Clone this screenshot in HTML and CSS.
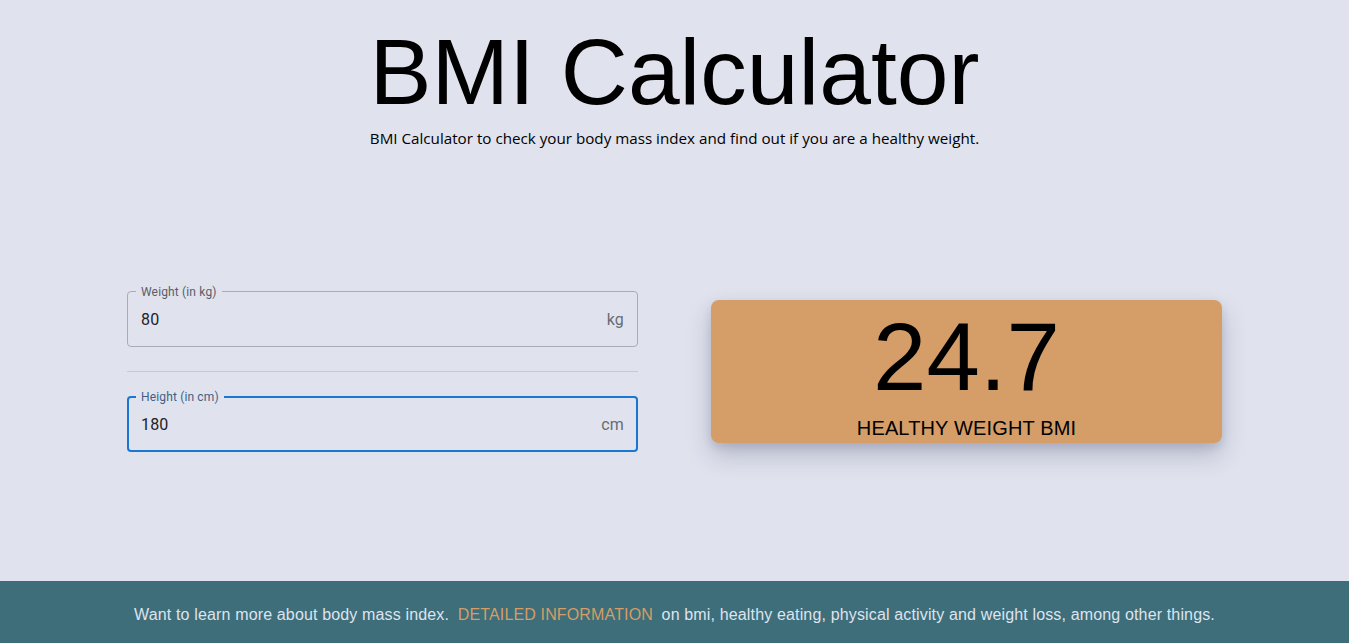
FILE: index.html
```html
<!DOCTYPE html>
<html lang="en">
<head>
<meta charset="utf-8">
<title>BMI Calculator</title>
<link rel="stylesheet" href="styles.css">
</head>
<body>
<div class="page">
  <header class="header">
    <h1 class="title">BMI Calculator</h1>
    <p class="subtitle">BMI Calculator to check your body mass index and find out if you are a healthy weight.</p>
  </header>
  <main class="main">
    <div class="form">
      <div class="field">
        <span class="field-label">Weight (in kg)</span>
        <span class="field-value">80</span>
        <span class="field-unit">kg</span>
      </div>
      <div class="divider"></div>
      <div class="field field-focused">
        <span class="field-label">Height (in cm)</span>
        <span class="field-value">180</span>
        <span class="field-unit">cm</span>
      </div>
    </div>
    <div class="result">
      <div class="result-value">24.7</div>
      <div class="result-label">HEALTHY WEIGHT BMI</div>
    </div>
  </main>
  <footer class="footer">
    <p class="footer-text">Want to learn more about body mass index. <a class="footer-link" href="#">DETAILED INFORMATION</a> on bmi, healthy eating, physical activity and weight loss, among other things.</p>
  </footer>
</div>
</body>
</html>
```

FILE: styles.css
```css
html, body {
  margin: 0;
  padding: 0;
}
body {
  background: #e0e3ee;
  font-family: "Liberation Sans", Arial, sans-serif;
  color: #000;
}
.page {
  min-height: 100vh;
  display: flex;
  flex-direction: column;
}
.header {
  text-align: center;
}
.title {
  margin: 18px 0 0;
  font-family: "Liberation Sans", Arial, sans-serif;
  font-weight: 400;
  font-size: 93px;
  line-height: 108px;
}
.subtitle {
  margin: 1px 0 0;
  font-family: "Open Sans", "Noto Sans", sans-serif;
  font-size: 15.2px;
  line-height: 22px;
}
.main {
  width: 1095px;
  margin: 142px auto 0;
  display: grid;
  grid-template-columns: 511px 511px;
  justify-content: space-between;
  align-items: center;
}
.form {
  display: flex;
  flex-direction: column;
}
.field {
  position: relative;
  box-sizing: border-box;
  height: 56px;
  border: 1px solid #a9abb6;
  border-radius: 4px;
  display: flex;
  align-items: center;
  padding: 0 13px 0 13px;
  font-family: Roboto, "Liberation Sans", sans-serif;
  font-size: 16px;
  letter-spacing: 0.15px;
}
.field-focused {
  border: 2px solid #1976d2;
  padding: 0 12px;
}
.field-label {
  position: absolute;
  left: 8px;
  top: -6px;
  padding: 0 5px;
  background: #e0e3ee;
  font-size: 12px;
  line-height: 12px;
  color: #5b5d66;
}
.field-focused .field-label {
  left: 7px;
  top: -7px;
  color: #3f5f85;
}
.field-value {
  flex: 1;
  color: #212226;
}
.field-unit {
  color: #6a6b73;
}
.divider {
  height: 1px;
  background: #c6c8d2;
  margin: 24px 0;
}
.result {
  box-sizing: border-box;
  height: 143px;
  background: #d59d67;
  border-radius: 8px;
  box-shadow: 0 12px 24px rgba(40, 45, 80, 0.24), 0 4px 8px rgba(40, 45, 80, 0.12);
  display: flex;
  flex-direction: column;
  align-items: center;
  padding-top: 9px;
}
.result-value {
  font-size: 96px;
  line-height: 96px;
}
.result-label {
  margin-top: 12px;
  font-size: 20px;
  line-height: 23px;
  letter-spacing: 0.15px;
}
.footer {
  margin-top: auto;
  box-sizing: border-box;
  height: 62px;
  padding-top: 5px;
  background: #3d6e7a;
  display: flex;
  align-items: center;
  justify-content: center;
}
.footer-text {
  margin: 0;
  font-size: 16px;
  line-height: 24px;
  color: #dfe3ee;
  letter-spacing: 0.15px;
}
.footer-link {
  color: #d59d67;
  text-decoration: none;
  margin: 0 4px;
}
```
